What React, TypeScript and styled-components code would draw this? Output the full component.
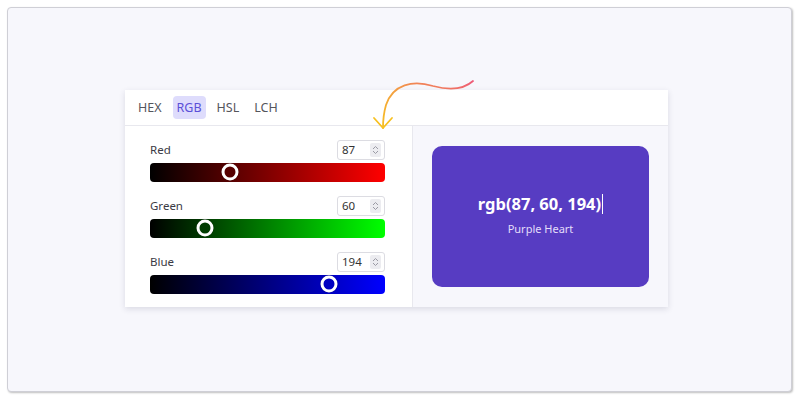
import React from 'react';
import styled, { createGlobalStyle } from 'styled-components';

const GlobalStyle = createGlobalStyle`
  html, body {
    margin: 0;
    background: #ffffff;
    font-family: "Noto Sans", "Open Sans", sans-serif;
  }
`;

const Frame = styled.div`
  position: relative;
  margin: 7px;
  width: 783px;
  height: 383px;
  border: 1px solid #cfcfd6;
  border-radius: 4px;
  background: #f7f7fc;
  box-shadow: 1px 1px 2px rgba(0, 0, 0, 0.25);
  display: flex;
  align-items: center;
  justify-content: center;
`;

const Card = styled.div`
  width: 543px;
  background: #ffffff;
  box-shadow: 0 2px 6px rgba(40, 40, 80, 0.14);
  display: flex;
  flex-direction: column;
  margin-right: 6px;
  margin-bottom: 3px;
`;

const Tabs = styled.div`
  display: flex;
  align-items: center;
  gap: 7px;
  height: 35px;
  padding: 0 9px;
  border-bottom: 1px solid #e8e8ee;
`;

const Tab = styled.button<{ $active?: boolean }>`
  border: none;
  font-family: inherit;
  font-size: 12.5px;
  height: 23px;
  padding: 0 4px;
  border-radius: 4px;
  background: ${(p) => (p.$active ? '#dedcfc' : 'transparent')};
  color: ${(p) => (p.$active ? '#5b4fd8' : '#55555c')};
  cursor: pointer;
`;

const Body = styled.div`
  display: flex;
  height: 181px;
`;

const Controls = styled.div`
  width: 287px;
  box-sizing: border-box;
  padding: 14px 27px 0 25px;
  display: flex;
  flex-direction: column;
  gap: 14px;
`;

const Row = styled.div`
  display: flex;
  flex-direction: column;
  gap: 3px;
`;

const RowHead = styled.div`
  display: flex;
  justify-content: space-between;
  align-items: center;
  height: 20px;
`;

const Label = styled.span`
  font-size: 11.5px;
  color: #3a3a44;
`;

const NumberBox = styled.div`
  width: 48px;
  height: 20px;
  box-sizing: border-box;
  border: 1px solid #dcdce2;
  border-radius: 3px;
  display: flex;
  align-items: center;
  justify-content: space-between;
  padding: 0 3px 0 4px;
  font-size: 11.5px;
  color: #333;
`;

const Spinner = styled.span`
  width: 11px;
  height: 14px;
  background: #ececf0;
  border-radius: 2px;
  display: flex;
  align-items: center;
  justify-content: center;
`;

const Track = styled.div<{ $to: string }>`
  position: relative;
  height: 19px;
  border-radius: 4px;
  background: linear-gradient(to right, #000000, ${(p) => p.$to});
`;

const Thumb = styled.span`
  position: absolute;
  top: 50%;
  width: 17px;
  height: 17px;
  box-sizing: border-box;
  border: 3px solid #ffffff;
  border-radius: 50%;
  transform: translate(-50%, -50%);
  box-shadow: 0 0 1px rgba(0, 0, 0, 0.5);
`;

const PreviewPane = styled.div`
  flex: 1;
  background: #f7f7fc;
  border-left: 1px solid #e8e8ee;
  padding: 20px 19px 20px 19px;
  display: flex;
`;

const Swatch = styled.div<{ $color: string }>`
  flex: 1;
  border-radius: 10px;
  background: ${(p) => p.$color};
  display: flex;
  flex-direction: column;
  align-items: center;
  justify-content: center;
  gap: 6px;
  padding-bottom: 4px;
`;

const ColorValue = styled.div`
  color: #ffffff;
  font-weight: 700;
  font-size: 16.5px;
  display: flex;
  align-items: center;
`;

const Caret = styled.span`
  display: inline-block;
  width: 1px;
  height: 20px;
  background: #ffffff;
  margin-left: 1px;
`;

const ColorName = styled.div`
  color: #e4defa;
  font-size: 11px;
`;

const Arrow = styled.svg`
  position: absolute;
  left: 360px;
  top: 62px;
  pointer-events: none;
`;

const channels = [
  { name: 'Red', value: 87, to: '#ff0000', fill: 'rgb(87,0,0)' },
  { name: 'Green', value: 60, to: '#00ff00', fill: 'rgb(0,60,0)' },
  { name: 'Blue', value: 194, to: '#0000ff', fill: 'rgb(0,0,194)' },
];

const SpinIcon = () => (
  <svg width="7" height="10" viewBox="0 0 7 10">
    <path d="M1 4 L3.5 1.5 L6 4 M1 6 L3.5 8.5 L6 6" fill="none" stroke="#9a9aa4" strokeWidth="1" />
  </svg>
);

export default function App() {
  const trackWidth = 235;
  return (
    <>
      <GlobalStyle />
      <Frame>
        <Card>
          <Tabs>
            <Tab>HEX</Tab>
            <Tab $active>RGB</Tab>
            <Tab>HSL</Tab>
            <Tab>LCH</Tab>
          </Tabs>
          <Body>
            <Controls>
              {channels.map((c) => (
                <Row key={c.name}>
                  <RowHead>
                    <Label>{c.name}</Label>
                    <NumberBox>
                      {c.value}
                      <Spinner>
                        <SpinIcon />
                      </Spinner>
                    </NumberBox>
                  </RowHead>
                  <Track $to={c.to}>
                    <Thumb style={{ left: (c.value / 255) * trackWidth, background: c.fill }} />
                  </Track>
                </Row>
              ))}
            </Controls>
            <PreviewPane>
              <Swatch $color="rgb(87, 60, 194)">
                <ColorValue>
                  rgb(87, 60, 194)
                  <Caret />
                </ColorValue>
                <ColorName>Purple Heart</ColorName>
              </Swatch>
            </PreviewPane>
          </Body>
        </Card>
        <Arrow width="115" height="65" viewBox="0 0 115 65">
          <defs>
            <linearGradient id="arrowGrad" x1="1" y1="0" x2="0" y2="1">
              <stop offset="0" stopColor="#ee5a78" />
              <stop offset="0.55" stopColor="#f3a040" />
              <stop offset="1" stopColor="#f7c020" />
            </linearGradient>
          </defs>
          <path
            d="M105 11 C95 20 80 20 65 16 C45 10 25 14 18 35 C16 42 15 50 15 58"
            fill="none"
            stroke="url(#arrowGrad)"
            strokeWidth="1.8"
            strokeLinecap="round"
          />
          <path
            d="M6 48 L15 58 L24 48"
            fill="none"
            stroke="#f7c020"
            strokeWidth="1.8"
            strokeLinecap="round"
            strokeLinejoin="round"
          />
        </Arrow>
      </Frame>
    </>
  );
}
